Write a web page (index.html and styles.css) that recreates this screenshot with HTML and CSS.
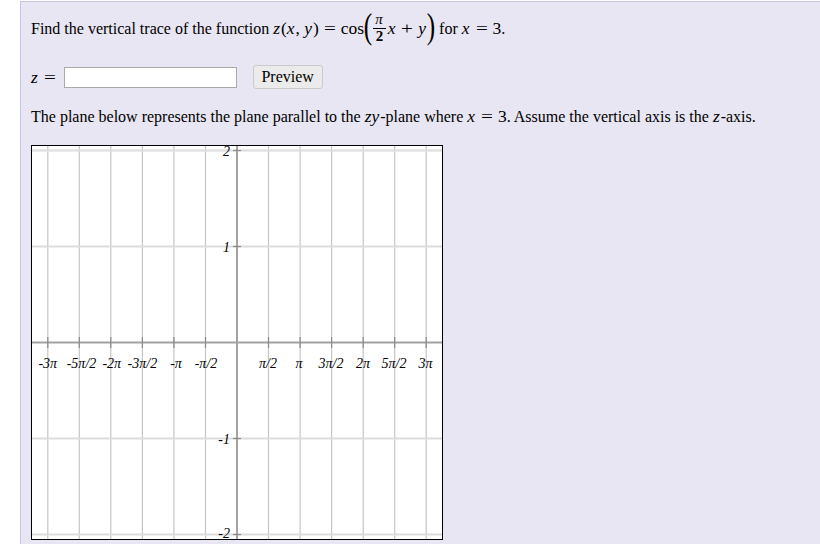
FILE: index.html
```html
<!DOCTYPE html>
<html>
<head>
<meta charset="utf-8">
<link rel="stylesheet" href="styles.css">
</head>
<body>
<div class="panel">
  <p class="q">Find the vertical trace of the function <span class="m"><i>z</i>(<i>x</i>, <i>y</i>)<span class="op">=</span>cos<span class="paren">(</span><span class="frac"><span class="num"><i>π</i></span><span class="den">2</span></span><i>x</i><span class="op">+</span><i>y</i><span class="paren">)</span></span> for <span class="m"><i>x</i><span class="op">=</span>3</span>.</p>
  <div class="answer">
    <span class="m"><i>z</i><span class="op">=</span></span>
    <input class="inp" type="text">
    <button class="btn">Preview</button>
  </div>
  <p class="desc">The plane below represents the plane parallel to the <span class="m"><i>zy</i></span>-plane where <span class="m"><i>x</i><span class="op">=</span>3</span>. Assume the vertical axis is the <span class="m"><i>z</i></span>-axis.</p>
  <div class="graph">
    <svg width="410" height="393" viewBox="0 0 410 393" xmlns="http://www.w3.org/2000/svg">
      <g class="vgrid">
        <line x1="15.8" y1="0" x2="15.8" y2="393"/>
        <line x1="47.3" y1="0" x2="47.3" y2="393"/>
        <line x1="78.8" y1="0" x2="78.8" y2="393"/>
        <line x1="110.4" y1="0" x2="110.4" y2="393"/>
        <line x1="141.9" y1="0" x2="141.9" y2="393"/>
        <line x1="173.5" y1="0" x2="173.5" y2="393"/>
        <line x1="236.5" y1="0" x2="236.5" y2="393"/>
        <line x1="268.1" y1="0" x2="268.1" y2="393"/>
        <line x1="299.6" y1="0" x2="299.6" y2="393"/>
        <line x1="331.2" y1="0" x2="331.2" y2="393"/>
        <line x1="362.7" y1="0" x2="362.7" y2="393"/>
        <line x1="394.2" y1="0" x2="394.2" y2="393"/>
      </g>
      <g class="hgrid">
        <line x1="0" y1="4.5" x2="410" y2="4.5"/>
        <line x1="0" y1="100.5" x2="410" y2="100.5"/>
        <line x1="0" y1="292.5" x2="410" y2="292.5"/>
        <line x1="0" y1="388.5" x2="410" y2="388.5"/>
      </g>
      <g class="axis">
        <line x1="0" y1="196.5" x2="410" y2="196.5"/>
        <line x1="205" y1="0" x2="205" y2="393"/>
      </g>
      <g class="tick">
        <line x1="15.8" y1="191" x2="15.8" y2="202"/>
        <line x1="47.3" y1="191" x2="47.3" y2="202"/>
        <line x1="78.8" y1="191" x2="78.8" y2="202"/>
        <line x1="110.4" y1="191" x2="110.4" y2="202"/>
        <line x1="141.9" y1="191" x2="141.9" y2="202"/>
        <line x1="173.5" y1="191" x2="173.5" y2="202"/>
        <line x1="236.5" y1="191" x2="236.5" y2="202"/>
        <line x1="268.1" y1="191" x2="268.1" y2="202"/>
        <line x1="299.6" y1="191" x2="299.6" y2="202"/>
        <line x1="331.2" y1="191" x2="331.2" y2="202"/>
        <line x1="362.7" y1="191" x2="362.7" y2="202"/>
        <line x1="394.2" y1="191" x2="394.2" y2="202"/>
        <line x1="201" y1="4.5" x2="209" y2="4.5"/>
        <line x1="201" y1="100.5" x2="209" y2="100.5"/>
        <line x1="201" y1="292.5" x2="209" y2="292.5"/>
        <line x1="201" y1="388.5" x2="209" y2="388.5"/>
      </g>
      <g class="xl">
        <text x="15.8" y="222">-3π</text>
        <text x="49.5" y="222">-5π/2</text>
        <text x="79.8" y="222">-2π</text>
        <text x="110.4" y="222">-3π/2</text>
        <text x="144" y="222">-π</text>
        <text x="174" y="222">-π/2</text>
        <text x="236" y="222">π/2</text>
        <text x="267" y="222">π</text>
        <text x="299" y="222">3π/2</text>
        <text x="331" y="222">2π</text>
        <text x="362" y="222">5π/2</text>
        <text x="393.5" y="222">3π</text>
      </g>
      <g class="yl">
        <text x="198" y="10">2</text>
        <text x="198" y="105.5">1</text>
        <text x="198" y="297.5">-1</text>
        <text x="198" y="392">-2</text>
      </g>
    </svg>
  </div>
</div>
</body>
</html>
```

FILE: styles.css
```css
html, body {
  margin: 0;
  padding: 0;
  background: #ffffff;
}
body {
  font-family: "Liberation Serif", "Times New Roman", serif;
  font-size: 16px;
  color: #000;
}
.panel {
  margin: 1px 0 0 20px;
  width: 793px;
  height: 560px;
  background: #e8e6f2;
  border-top: 1px solid #c4c4ea;
  border-left: 1px solid #c4c4ea;
  border-right: 1px solid #c4c4ea;
  padding: 0 0 0 10px;
}
.q {
  margin: 0;
  padding-top: 11px;
  height: 36px;
  line-height: 30px;
}
.m {
  font-size: 17.5px;
  font-family: "Liberation Serif", serif;
}
.m i {
  font-family: "Liberation Serif", serif;
  font-style: italic;
  margin-right: 1px;
}
.op {
  display: inline-block;
  margin: 0 6px;
  transform: scaleX(1.2);
}
.paren {
  display: inline-block;
  font-size: 36px;
  line-height: 20px;
  transform: scaleX(0.7);
  vertical-align: -4px;
  margin: 0 -2px;
}
.frac {
  display: inline-flex;
  flex-direction: column;
  align-items: center;
  vertical-align: middle;
  font-size: 15px;
  line-height: 13px;
  margin: 0 2px 0 1px;
  position: relative;
  top: -2px;
}
.num {
  border-bottom: 1px solid #000;
  padding: 0 2px 2px;
}
.den {
  padding-top: 1px;
  font-weight: bold;
  font-family: "Liberation Serif", serif;
}
.answer {
  display: flex;
  align-items: center;
  height: 26px;
  margin-top: 15px;
}
.answer .m {
  margin-right: 3px;
}
.inp {
  width: 169px;
  height: 17px;
  border: 1px solid #a9a9a9;
  padding: 1px;
  margin: 0 16px 0 0;
  background: #fff;
}
.btn {
  font-family: "Liberation Serif", "Times New Roman", serif;
  font-size: 16px;
  height: 24px;
  width: 70px;
  padding: 0;
  background: #ebebeb;
  border: 1px solid #cacaca;
  border-radius: 3px;
  color: #000;
}
.desc {
  margin: 15px 0 0 0;
  line-height: 22px;
}
.graph {
  margin-top: 17px;
  width: 410px;
  height: 393px;
  border: 1px solid #000;
  background: #fff;
}
.graph svg {
  display: block;
}
.vgrid line {
  stroke: #c6c6c6;
  stroke-width: 1.2;
}
.hgrid line {
  stroke: #dcdcdc;
  stroke-width: 2;
}
.axis line {
  stroke: #a2a2a2;
  stroke-width: 2;
}
.tick line {
  stroke: #8a8a8a;
  stroke-width: 1.2;
}
.xl text {
  font-family: "Liberation Serif", serif;
  font-style: italic;
  font-size: 14px;
  text-anchor: middle;
  fill: #000;
}
.yl text {
  font-family: "Liberation Serif", serif;
  font-style: italic;
  font-size: 14px;
  text-anchor: end;
  fill: #000;
}
```
